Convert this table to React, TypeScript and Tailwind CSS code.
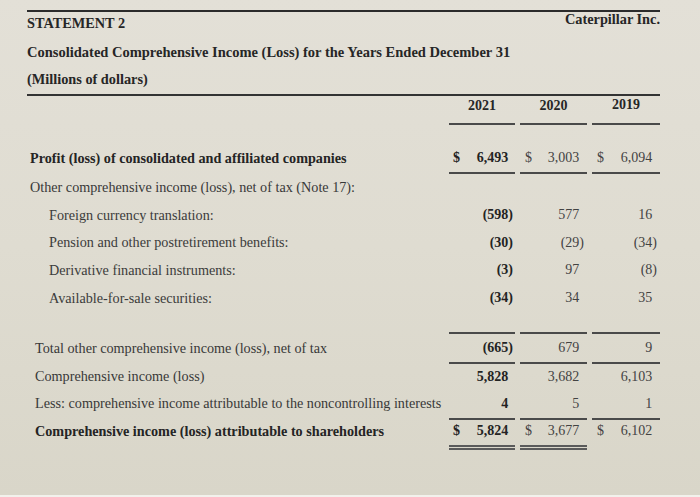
import React from "react";

const serif = { fontFamily: '"Liberation Serif", "Times New Roman", serif' };

type Cell = { v: string; d?: boolean };

function Val({ cell, bold, padR, padL }: { cell?: Cell; bold?: boolean; padR: string; padL: string }) {
  if (!cell) return <div />;
  const paren = cell.v.startsWith("(");
  return (
    <div className={`flex items-center justify-between ${padR} ${padL} ${bold ? "font-bold text-[#232323]" : "text-[#434343]"}`}>
      <span>{cell.d ? "$" : ""}</span>
      <span>
        {cell.v}
        {!paren && <span className="invisible">)</span>}
      </span>
    </div>
  );
}

function Row({
  label,
  vals,
  h,
  labelCls,
}: {
  label: string;
  vals?: [Cell, Cell, Cell];
  h: string;
  labelCls: string;
}) {
  return (
    <div className={`grid grid-cols-[1fr_66px_67px_68px] gap-x-[5px] items-center ${h}`}>
      <div className={`whitespace-nowrap text-[14.2px] ${labelCls}`}>{label}</div>
      <Val cell={vals?.[0]} bold padR="pr-[2px]" padL="pl-[4px]" />
      <Val cell={vals?.[1]} padR="pr-[3px]" padL="pl-[5px]" />
      <Val cell={vals?.[2]} padR="pr-[3px]" padL="pl-[5px]" />
    </div>
  );
}

function Lines({ h, cls, count = 3 }: { h: string; cls: string; count?: number }) {
  return (
    <div className={`grid grid-cols-[1fr_66px_67px_68px] gap-x-[5px] ${h}`}>
      <div />
      {[0, 1, 2].map((i) => (i < count ? <div key={i} className={cls} /> : <div key={i} />))}
    </div>
  );
}

export default function App() {
  return (
    <div className="w-[700px] h-[497px] flex flex-col overflow-hidden" style={serif}>
      <div className="flex-1 bg-gradient-to-b from-[#e3e0d7] via-[#dfdcd1] to-[#d9d6c9] pl-[27px] pr-[40px] pt-[10px] text-[14px] leading-none text-[#2a2a2a]">
        <div className="h-[2px] bg-[#2b2b2b]" />
        <div className="h-[22px] flex items-center justify-between font-bold text-[#262626] text-[14.3px]">
          <span>STATEMENT 2</span>
          <span className="-translate-y-[4px]">Caterpillar Inc.</span>
        </div>
        <div className="h-[36px] flex items-center font-bold text-[#262626] text-[14.5px]">
          Consolidated Comprehensive Income (Loss) for the Years Ended December 31
        </div>
        <div className="h-[18px] flex items-center font-bold text-[#262626] text-[14.3px]">(Millions of dollars)</div>
        <div className="h-[6px]" />
        <div className="h-[2px] bg-[#333]" />
        <div className="grid grid-cols-[1fr_66px_67px_68px] gap-x-[5px] h-[20px] items-center font-bold text-[#262626]">
          <div />
          <div className="text-center">2021</div>
          <div className="text-center">2020</div>
          <div className="text-center -translate-y-[1px]">2019</div>
        </div>
        <div className="h-[7px]" />
        <Lines h="h-[2px]" cls="bg-[#4a4a4a]" />
        <div className="h-[19px]" />
        <Row
          h="h-[28px]"
          labelCls="pl-[3px] font-bold text-[#242424]"
          label="Profit (loss) of consolidated and affiliated companies"
          vals={[{ v: "6,493", d: true }, { v: "3,003", d: true }, { v: "6,094", d: true }]}
        />
        <Lines h="h-[2px]" cls="bg-[#4a4a4a]" />
        <Row h="h-[27px]" labelCls="pl-[3px] text-[#383838]" label="Other comprehensive income (loss), net of tax (Note 17):" />
        <Row h="h-[28px]" labelCls="pl-[22px] text-[#3b3b3b]" label="Foreign currency translation:" vals={[{ v: "(598)" }, { v: "577" }, { v: "16" }]} />
        <Row h="h-[27px]" labelCls="pl-[22px] text-[#3b3b3b]" label="Pension and other postretirement benefits:" vals={[{ v: "(30)" }, { v: "(29)" }, { v: "(34)" }]} />
        <Row h="h-[28px]" labelCls="pl-[22px] text-[#3b3b3b]" label="Derivative financial instruments:" vals={[{ v: "(3)" }, { v: "97" }, { v: "(8)" }]} />
        <Row h="h-[28px]" labelCls="pl-[22px] text-[#3b3b3b]" label="Available-for-sale securities:" vals={[{ v: "(34)" }, { v: "34" }, { v: "35" }]} />
        <div className="h-[20px]" />
        <Lines h="h-[2px]" cls="bg-[#4a4a4a]" />
        <Row h="h-[28px]" labelCls="pl-[8px] text-[#383838]" label="Total other comprehensive income (loss), net of tax" vals={[{ v: "(665)" }, { v: "679" }, { v: "9" }]} />
        <Lines h="h-[2px]" cls="bg-[#4a4a4a]" />
        <Row h="h-[25px]" labelCls="pl-[8px] text-[#383838]" label="Comprehensive income (loss)" vals={[{ v: "5,828" }, { v: "3,682" }, { v: "6,103" }]} />
        <Row h="h-[29px]" labelCls="pl-[8px] text-[#383838]" label="Less: comprehensive income attributable to the noncontrolling interests" vals={[{ v: "4" }, { v: "5" }, { v: "1" }]} />
        <Lines h="h-[2px]" cls="bg-[#4a4a4a]" />
        <Row
          h="h-[22px]"
          labelCls="pl-[8px] font-bold text-[#242424]"
          label="Comprehensive income (loss) attributable to shareholders"
          vals={[{ v: "5,824", d: true }, { v: "3,677", d: true }, { v: "6,102", d: true }]}
        />
        <div className="h-[3px]" />
        <Lines h="h-[5px]" cls="border-y-2 border-[#5a5a5a]" count={2} />
      </div>
      <div className="h-[2px] bg-[#f2f1ec]" />
    </div>
  );
}
